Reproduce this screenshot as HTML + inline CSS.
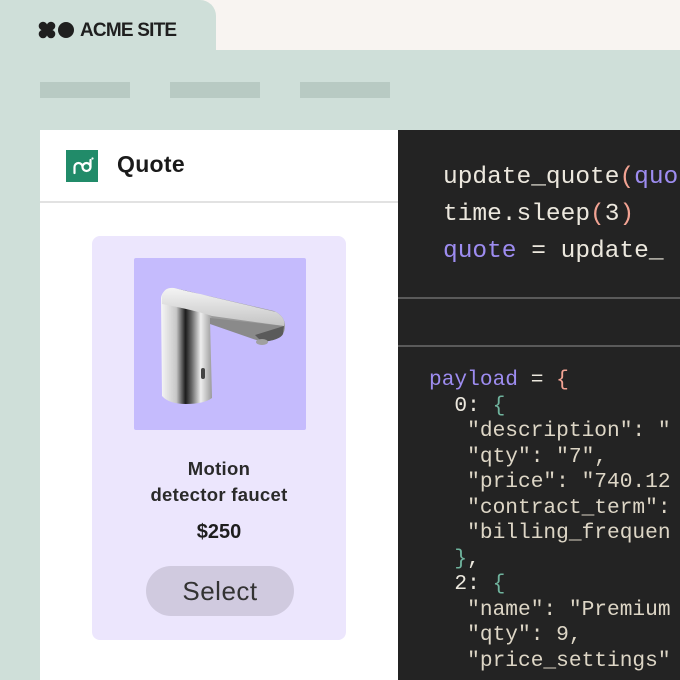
<!DOCTYPE html>
<html><head><meta charset="utf-8"><style>
*{margin:0;padding:0;box-sizing:border-box}
body{width:680px;height:680px;overflow:hidden;background:#f8f4f1;position:relative;font-family:"Liberation Sans",sans-serif}
.abs{position:absolute}
.sage{left:0;top:50px;width:680px;height:630px;background:#cfdfd9}
.tab{left:0;top:0;width:216px;height:60px;background:#cfdfd9;border-top-right-radius:16px}
.bar{top:82px;height:16px;width:90px;background:#b8cac3}
.white{left:40px;top:130px;width:358px;height:550px;background:#fff}
.dark{left:398px;top:130px;width:282px;height:550px;background:#232323;overflow:hidden}
.mono{font-family:"Liberation Mono","DejaVu Sans Mono",monospace;white-space:pre}
.p{color:#9d8cf0}.w{color:#ece8de}.s{color:#f2a393}.t{color:#6fb39d}.k{color:#ddd6c6}
</style></head><body>
<div class="abs sage"></div>
<div class="abs tab"></div>
<svg class="abs" style="left:38px;top:21px" width="38" height="20" viewBox="0 0 38 20">
<g fill="#1f1f1f"><circle cx="5" cy="5" r="4.3"/><circle cx="13" cy="5" r="4.3"/><circle cx="5" cy="13" r="4.3"/><circle cx="13" cy="13" r="4.3"/><rect x="6" y="6" width="6" height="6"/><circle cx="28" cy="9" r="8"/></g></svg>
<div class="abs" style="left:80px;top:20px;font-size:19px;font-weight:bold;color:#1f1f1f;letter-spacing:-0.8px">ACME SITE</div>
<div class="abs bar" style="left:40px"></div>
<div class="abs bar" style="left:170px"></div>
<div class="abs bar" style="left:300px"></div>
<div class="abs white"></div>
<div class="abs" style="left:40px;top:201px;width:358px;height:2px;background:#e2e2e2"></div>
<div class="abs" style="left:66px;top:150px;width:32px;height:32px;background:#218b69"></div>
<svg class="abs" style="left:66px;top:150px" width="32" height="32" viewBox="0 0 32 32" fill="none" stroke="#fff" stroke-width="2.2" stroke-linecap="round">
<path d="M8.5 23V17a4 4 0 0 1 8 0a4 4 0 0 0 8 0a4 4 0 0 0 -8 0"/><path d="M24.5 10v7"/><circle cx="26.5" cy="8.5" r=".6" stroke-width="1"/></svg>
<div class="abs" style="left:117px;top:151px;font-size:23px;font-weight:bold;color:#1a1a1a;letter-spacing:0.3px">Quote</div>
<div class="abs" style="left:92px;top:236px;width:254px;height:404px;background:#ece6fd;border-radius:8px"></div>
<div class="abs" style="left:134px;top:258px;width:172px;height:172px;background:#c5bbfd;border-radius:2px"></div>
<svg class="abs" style="left:134px;top:258px" width="172" height="172" viewBox="0 0 172 172">
<defs><linearGradient id="g" gradientUnits="userSpaceOnUse" x1="27" x2="78" y1="0" y2="0"><stop offset="0" stop-color="#f6f6f6"/><stop offset=".3" stop-color="#c8c8c8"/><stop offset=".48" stop-color="#1c1c1c"/><stop offset=".6" stop-color="#666"/><stop offset=".78" stop-color="#eeeeee"/><stop offset="1" stop-color="#9a9a9a"/></linearGradient>
<linearGradient id="g2" y1="0" y2="1" x1="0" x2="0"><stop offset="0" stop-color="#f4f4f4"/><stop offset="1" stop-color="#c4c4c4"/></linearGradient></defs>
<path d="M27 40 L28 138 Q35 146 52 146 Q70 146 78 140 L76 62 L125 79 L140 80 Q151 79 151 68 Q151 58 140 53 L40 30 Q28 31 27 40 Z" fill="url(#g)"/>
<path d="M28 38 Q30 29 40 30 L142 54 Q152 60 150 68 L78 58 Q60 52 28 46 Z" fill="url(#g2)"/>
<path d="M76 60 L150 68 L149 76 Q146 82 128 84 L76 66 Z" fill="#8a8a8a"/>
<path d="M121 77 L150 68 L149 76 Q146 82 128 84 Z" fill="#5a5a5a"/>
<ellipse cx="128" cy="84" rx="6" ry="3" fill="#a0a0a0"/>
<rect x="67" y="110" width="4" height="11" rx="2" fill="#444"/>
</svg>
<div class="abs" style="left:92px;top:456px;width:254px;text-align:center;font-size:18.5px;font-weight:bold;color:#2a2a2a;line-height:26px;letter-spacing:0.3px">Motion<br>detector faucet</div>
<div class="abs" style="left:92px;top:521px;width:254px;text-align:center;font-size:20px;font-weight:bold;color:#1e1e1e">$250</div>
<div class="abs" style="left:146px;top:566px;width:148px;height:50px;background:#d0cadf;border-radius:25px;text-align:center;line-height:50px;font-size:26px;color:#333;letter-spacing:0.5px">Select</div>
<div class="abs dark">
<div class="abs mono" style="left:45px;top:29px;font-size:24.5px;line-height:37px"><span class="w">update_quote</span><span class="s">(</span><span class="p">quote</span>
<span class="w">time.sleep</span><span class="s">(</span><span class="w">3</span><span class="s">)</span>
<span class="p">quote</span><span class="w"> = update_</span></div>
<div class="abs" style="left:0;top:167px;width:282px;height:2px;background:#5a5a5a"></div>
<div class="abs" style="left:0;top:215px;width:282px;height:2px;background:#5a5a5a"></div>
<div class="abs mono" style="left:31px;top:238px;font-size:21.2px;line-height:25.5px"><span class="p">payload</span><span class="w"> = </span><span class="s">{</span>
<span class="w">  0: </span><span class="t">{</span>
<span class="k">   "description": "</span>
<span class="k">   "qty": "7",</span>
<span class="k">   "price": "740.12</span>
<span class="k">   "contract_term":</span>
<span class="k">   "billing_frequen</span>
<span class="t">  }</span><span class="w">,</span>
<span class="w">  2: </span><span class="t">{</span>
<span class="k">   "name": "Premium</span>
<span class="k">   "qty": 9,</span>
<span class="k">   "price_settings"</span></div>
</div>
</body></html>
